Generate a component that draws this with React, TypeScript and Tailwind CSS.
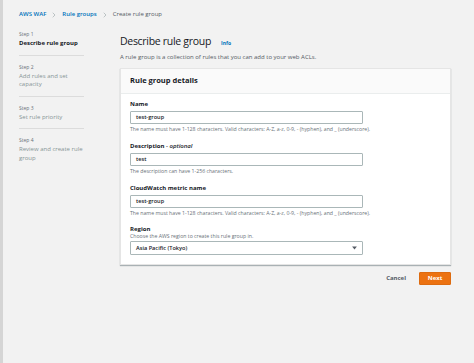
import { ChevronRight } from 'lucide-react';

const fieldHint =
  'The name must have 1-128 characters. Valid characters: A-Z, a-z, 0-9, - (hyphen), and _ (underscore).';

function Field({ label, optional, hint, value }: { label: string; optional?: boolean; hint?: string; value: string }) {
  return (
    <div className="mb-[8px]">
      <div className="text-[6px] font-bold leading-[10px] text-[#16191f]">
        {label}
        {optional && <span className="italic font-semibold"> - optional</span>}
      </div>
      <div className="mt-[2px] w-[233px] h-[13px] border border-[#aab7b8] bg-white rounded-[1px] flex items-center px-[5px] text-[5.6px] font-semibold text-[#16191f]">
        {value}
      </div>
      {hint && <div className="mt-[2px] text-[5.2px] leading-[7px] text-[#687078] whitespace-nowrap">{hint}</div>}
    </div>
  );
}

function Step({ n, title, active, last }: { n: number; title: string; active?: boolean; last?: boolean }) {
  return (
    <div className={last ? 'pt-[7px]' : 'pt-[7px] pb-[7px] border-b border-[#dcdcdc]'}>
      <div className="text-[5px] leading-[9px] text-[#687078]">Step {n}</div>
      <div className={active ? 'text-[6px] leading-[8.5px] font-bold text-[#16191f] whitespace-nowrap' : 'text-[6px] leading-[8.5px] text-[#879596]'}>{title}</div>
    </div>
  );
}

export default function App() {
  return (
    <div
      className="w-[474px] h-[363px] bg-[#f2f2f2] border-l-[3px] border-[#d5d5d5] overflow-hidden"
      style={{ fontFamily: '"Open Sans", "Noto Sans", sans-serif' }}
    >
      <div className="flex items-center pl-[16px] pt-[9px] h-[20px] text-[6px]">
        <span className="text-[#0073bb] font-semibold">AWS WAF</span>
        <ChevronRight className="w-[8px] h-[8px] mx-[4px] text-[#879596]" strokeWidth={1.5} />
        <span className="text-[#0073bb] font-semibold">Rule groups</span>
        <ChevronRight className="w-[8px] h-[8px] mx-[4px] text-[#879596]" strokeWidth={1.5} />
        <span className="text-[#545b64]">Create rule group</span>
      </div>

      <div className="flex pl-[16px] pt-[3px]">
        <div className="w-[65px] shrink-0">
          <Step n={1} title="Describe rule group" active />
          <Step n={2} title="Add rules and set capacity" />
          <Step n={3} title="Set rule priority" />
          <Step n={4} title="Review and create rule group" last />
        </div>

        <div className="ml-[36px] w-[331px]">
          <div className="flex items-baseline mt-[10px]">
            <h1 className="text-[10.5px] leading-[16px] text-[#16191f] tracking-[-0.3px]">Describe rule group</h1>
            <span className="ml-[10px] text-[5px] font-bold text-[#0073bb]">Info</span>
          </div>
          <p className="mt-[4px] text-[6px] leading-[9px] text-[#545b64]">
            A rule group is a collection of rules that you can add to your web ACLs.
          </p>

          <div className="mt-[6px] bg-white shadow-[0_1px_1px_rgba(0,28,36,0.3)] border border-[#e5e5e5]">
            <div className="h-[25px] bg-[#fafafa] border-b border-[#eaeded] flex items-center px-[9px] text-[7.5px] font-bold text-[#16191f]">
              Rule group details
            </div>
            <div className="px-[9px] pt-[5px] pb-[1px]">
              <Field label="Name" value="test-group" hint={fieldHint} />
              <Field label="Description" optional value="test" hint="The description can have 1-256 characters." />
              <Field label="CloudWatch metric name" value="test-group" hint={fieldHint} />
              <div className="mb-[8px]">
                <div className="text-[6px] font-bold leading-[8px] text-[#16191f]">Region</div>
                <div className="text-[5.2px] leading-[6px] text-[#687078]">Choose the AWS region to create this rule group in.</div>
                <div className="mt-[2px] w-[233px] h-[14px] border border-[#aab7b8] bg-white rounded-[1px] flex items-center justify-between px-[5px] text-[5.6px] font-semibold text-[#16191f]">
                  <span>Asia Pacific (Tokyo)</span>
                  <svg width="5" height="4" viewBox="0 0 6 5">
                    <path d="M0 0.5 L6 0.5 L3 4.5 Z" fill="#545b64" />
                  </svg>
                </div>
              </div>
            </div>
          </div>

          <div className="flex justify-end items-center mt-[7px]">
            <span className="text-[6px] font-bold text-[#545b64] mr-[13px]">Cancel</span>
            <div className="w-[32px] h-[13px] bg-[#ec7211] border border-[#dd6b10] rounded-[1px] flex items-center justify-center text-[6px] font-bold text-white">
              Next
            </div>
          </div>
        </div>
      </div>
    </div>
  );
}
